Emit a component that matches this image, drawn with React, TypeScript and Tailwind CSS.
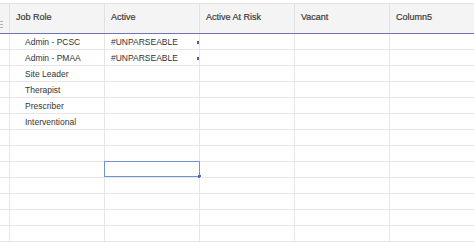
import React from "react";

const COLUMNS = ["Job Role", "Active", "Active At Risk", "Vacant", "Column5"];

const ROWS: string[][] = [
  ["Admin - PCSC", "#UNPARSEABLE"],
  ["Admin - PMAA", "#UNPARSEABLE"],
  ["Site Leader", ""],
  ["Therapist", ""],
  ["Prescriber", ""],
  ["Interventional", ""],
];

const ROW_COUNT = 13;
const SELECTED_ROW = 8;

const cellBase = "relative h-4 border-r border-b border-[#e6e6e6] shrink-0";
const headBase = "pl-[6px] pt-[7px] text-[9px] font-medium text-[#3a3a3a] [-webkit-text-stroke:0.2px_#3a3a3a]";

const App: React.FC = () => {
  return (
    <div
      className="w-[474px] h-[245px] overflow-hidden bg-white text-[#333333]"
      style={{ fontFamily: '"Liberation Sans", Arial, sans-serif' }}
    >
      <div className="pt-[3px]">
        {/* Column headers */}
        <div className="flex h-[31px] border-t border-b border-t-[#e2e2e2] border-b-[#6f74b6] bg-[#f4f4f4]">
          <div className="w-[10px] shrink-0 border-r border-[#e2e2e2] flex flex-col justify-center gap-[2px] pt-[12px]">
            <span className="block w-[3px] h-px bg-[#b5b5b5]" />
            <span className="block w-[3px] h-px bg-[#b5b5b5]" />
            <span className="block w-[3px] h-px bg-[#b5b5b5]" />
          </div>
          {COLUMNS.map((col, i) => (
            <div
              key={col}
              className={
                i === COLUMNS.length - 1
                  ? `flex-1 ${headBase}`
                  : `w-[95px] shrink-0 border-r border-[#e2e2e2] ${headBase}`
              }
            >
              {col}
            </div>
          ))}
        </div>

        {/* Body rows */}
        {Array.from({ length: ROW_COUNT }).map((_, r) => {
          const row = ROWS[r] ?? ["", ""];
          return (
            <div key={r} className="flex">
              <div className={`${cellBase} w-[10px]`} />
              <div className={`${cellBase} w-[95px] pl-[15px] text-[8.5px] leading-[16px]`}>
                {row[0]}
              </div>
              <div className={`${cellBase} w-[95px] pl-[6px] text-[8.5px] leading-[16px]`}>
                {row[1]}
                {row[1] && (
                  <span className="absolute right-0 top-[7px] w-[2px] h-[3px] bg-[#3d5fa8]" />
                )}
                {r === SELECTED_ROW && (
                  <span className="absolute -left-px -top-px w-[96px] h-[16px] border-[1.5px] border-[#6f93d3]">
                    <span className="absolute -right-[2px] -bottom-[2px] w-[3px] h-[3px] bg-[#4a6fbf]" />
                  </span>
                )}
              </div>
              <div className={`${cellBase} w-[95px]`} />
              <div className={`${cellBase} w-[95px]`} />
              <div className="relative h-4 border-b border-[#e6e6e6] flex-1" />
            </div>
          );
        })}
      </div>
    </div>
  );
};

export default App;
